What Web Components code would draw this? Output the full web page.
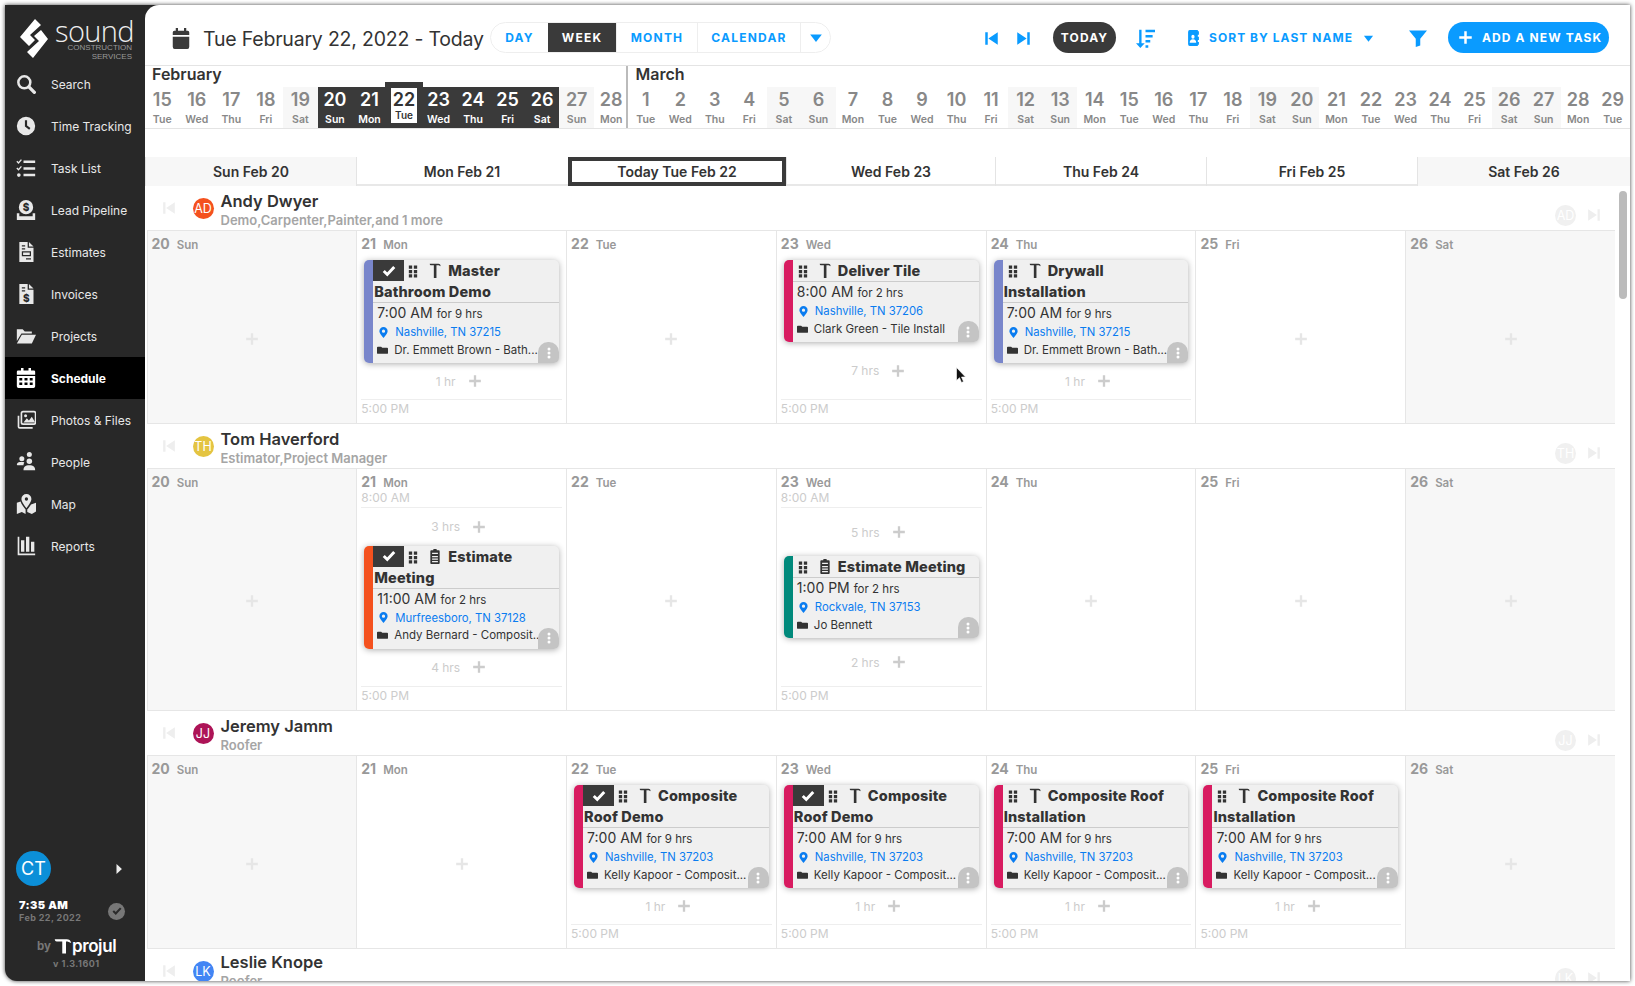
<!DOCTYPE html>
<html lang="en">
<head>
<meta charset="utf-8">
<title>Schedule</title>
<style>
	html, body { margin: 0; height: 100%; overflow: hidden; background: #fff; font-family: Inter, "Liberation Sans", sans-serif; }
	body { padding: 5px; box-sizing: border-box; }
</style>
</head>
<body>

<x-app>
	<x-sidebar slot="side">
		<x-nav-item icon="search" label="Search"></x-nav-item>
		<x-nav-item icon="clock" label="Time Tracking"></x-nav-item>
		<x-nav-item icon="tasks" label="Task List"></x-nav-item>
		<x-nav-item icon="lead" label="Lead Pipeline"></x-nav-item>
		<x-nav-item icon="estimate" label="Estimates"></x-nav-item>
		<x-nav-item icon="invoice" label="Invoices"></x-nav-item>
		<x-nav-item icon="open-folder" label="Projects"></x-nav-item>
		<x-nav-item icon="calendar-grid" label="Schedule" active></x-nav-item>
		<x-nav-item icon="photos" label="Photos &amp; Files"></x-nav-item>
		<x-nav-item icon="people" label="People"></x-nav-item>
		<x-nav-item icon="map" label="Map"></x-nav-item>
		<x-nav-item icon="reports" label="Reports"></x-nav-item>
	</x-sidebar>

	<x-topbar></x-topbar>
	<x-month-strip></x-month-strip>
	<x-week-head></x-week-head>

	<x-schedule>
		<x-person-row name="Andy Dwyer" roles="Demo,Carpenter,Painter,and 1 more" initials="AD" color="#f4511e" style="--grid-h:192px">
			<x-day date="20" dow="Sun" weekend></x-day>
			<x-day date="21" dow="Mon">
				<x-task-card strip="#7986cb" check tool="hammer" title="Master Bathroom Demo" time="7:00 AM" hrs="for 9 hrs" place="Nashville, TN 37215" job="Dr. Emmett Brown - Bath..."></x-task-card>
				<x-gap label="1 hr"></x-gap>
			</x-day>
			<x-day date="22" dow="Tue"></x-day>
			<x-day date="23" dow="Wed">
				<x-task-card strip="#d81b60" tool="hammer" title="Deliver Tile" time="8:00 AM" hrs="for 2 hrs" place="Nashville, TN 37206" job="Clark Green - Tile Install"></x-task-card>
				<x-gap label="7 hrs"></x-gap>
			</x-day>
			<x-day date="24" dow="Thu">
				<x-task-card strip="#7986cb" tool="hammer" title="Drywall Installation" time="7:00 AM" hrs="for 9 hrs" place="Nashville, TN 37215" job="Dr. Emmett Brown - Bath..."></x-task-card>
				<x-gap label="1 hr"></x-gap>
			</x-day>
			<x-day date="25" dow="Fri"></x-day>
			<x-day date="26" dow="Sat" weekend></x-day>
		</x-person-row>

		<x-person-row name="Tom Haverford" roles="Estimator,Project Manager" initials="TH" color="#e4c441" style="--grid-h:241px">
			<x-day date="20" dow="Sun" weekend></x-day>
			<x-day date="21" dow="Mon" start="8:00 AM">
				<x-gap label="3 hrs"></x-gap>
				<x-task-card strip="#f4511e" check tool="clipboard" title="Estimate Meeting" time="11:00 AM" hrs="for 2 hrs" place="Murfreesboro, TN 37128" job="Andy Bernard - Composit..."></x-task-card>
				<x-gap label="4 hrs"></x-gap>
			</x-day>
			<x-day date="22" dow="Tue"></x-day>
			<x-day date="23" dow="Wed" start="8:00 AM">
				<x-gap label="5 hrs"></x-gap>
				<x-task-card strip="#00897b" tool="clipboard" title="Estimate Meeting" time="1:00 PM" hrs="for 2 hrs" place="Rockvale, TN 37153" job="Jo Bennett"></x-task-card>
				<x-gap label="2 hrs"></x-gap>
			</x-day>
			<x-day date="24" dow="Thu"></x-day>
			<x-day date="25" dow="Fri"></x-day>
			<x-day date="26" dow="Sat" weekend></x-day>
		</x-person-row>

		<x-person-row name="Jeremy Jamm" roles="Roofer" initials="JJ" color="#ad1457" style="--grid-h:192px">
			<x-day date="20" dow="Sun" weekend></x-day>
			<x-day date="21" dow="Mon"></x-day>
			<x-day date="22" dow="Tue">
				<x-task-card strip="#d81b60" check tool="hammer" title="Composite Roof Demo" time="7:00 AM" hrs="for 9 hrs" place="Nashville, TN 37203" job="Kelly Kapoor - Composit..."></x-task-card>
				<x-gap label="1 hr"></x-gap>
			</x-day>
			<x-day date="23" dow="Wed">
				<x-task-card strip="#d81b60" check tool="hammer" title="Composite Roof Demo" time="7:00 AM" hrs="for 9 hrs" place="Nashville, TN 37203" job="Kelly Kapoor - Composit..."></x-task-card>
				<x-gap label="1 hr"></x-gap>
			</x-day>
			<x-day date="24" dow="Thu">
				<x-task-card strip="#d81b60" tool="hammer" title="Composite Roof Installation" time="7:00 AM" hrs="for 9 hrs" place="Nashville, TN 37203" job="Kelly Kapoor - Composit..."></x-task-card>
				<x-gap label="1 hr"></x-gap>
			</x-day>
			<x-day date="25" dow="Fri">
				<x-task-card strip="#d81b60" tool="hammer" title="Composite Roof Installation" time="7:00 AM" hrs="for 9 hrs" place="Nashville, TN 37203" job="Kelly Kapoor - Composit..."></x-task-card>
				<x-gap label="1 hr"></x-gap>
			</x-day>
			<x-day date="26" dow="Sat" weekend></x-day>
		</x-person-row>

		<x-person-row name="Leslie Knope" roles="Roofer" initials="LK" color="#4285f4" style="--grid-h:192px;--name-top:2px"></x-person-row>
	</x-schedule>

	<x-cursor slot="over"></x-cursor>
</x-app>

<script>
////////////////////////////////////////////////////////////////
//	icons, all drawn on a 24 box unless a size says otherwise
const
ICONS = {
	search			: `<circle cx="10" cy="10" r="7.2" fill="none" stroke="currentColor" stroke-width="3"/><path d="M15.5 15.5 22 22" stroke="currentColor" stroke-width="4" stroke-linecap="round"/>`
,	clock			: `<path fill-rule="evenodd" fill="currentColor" d="M12 1a11 11 0 1 0 0 22 11 11 0 0 0 0-22ZM10.7 5h2.6v6.5l4 3-1.5 2-5.1-3.9Z"/>`
,	tasks			: `<path fill="currentColor" d="M9 3h14v3H9zM9 11h14v3H9zM9 19h14v3H9z"/><path d="m1 4 2 2 3.5-4M1 12l2 2 3.5-4" fill="none" stroke="currentColor" stroke-width="1.6"/><circle cx="3.4" cy="20.5" r="2.2" fill="currentColor"/>`
,	lead			: `<path fill-rule="evenodd" fill="currentColor" d="M12 0a8.6 8.6 0 1 0 0 17.2A8.6 8.6 0 0 0 12 0ZM1 16h3v3.6h16V16h3v8H1Z"/><text x="12" y="13.4" text-anchor="middle" font-size="12" font-weight="800" font-family="Inter" fill="#282828">$</text>`
,	estimate		: `<path fill="currentColor" d="M4 0h10v7h7v17H4Z"/><path fill="currentColor" d="M15.5 0 21 5.5h-5.500Z"/><path fill="#282828" d="M7 4h4v1.500H7zM7 7.500h4V9H7zM7 11h11v6H7z"/><path fill="currentColor" d="M8.500 12.500h8v3h-8z"/><path fill="#282828" d="M12 19.500h6V21h-6z"/>`
,	invoice			: `<path fill="currentColor" d="M4 0h10v7h7v17H4Z"/><path fill="currentColor" d="M15.5 0 21 5.5h-5.500Z"/><path fill="#282828" d="M7 4h4v1.500H7zM7 7.500h4V9H7z"/><text x="12.500" y="21" text-anchor="middle" font-size="12" font-weight="800" font-family="Inter" fill="#282828">$</text>`
,	'open-folder'	: `<path fill="currentColor" d="M1 4h7l2.500 2.500H19V9H6.500L1 18ZM7 10.500h17L19 21H1Z"/>`
,	'calendar-grid'	: `<path fill-rule="evenodd" fill="currentColor" d="M6 0h3v3h6V0h3v3h3.500A1.500 1.500 0 0 1 23 4.500V8H1V4.500A1.500 1.500 0 0 1 2.500 3H6ZM1 9.500h22V22a2 2 0 0 1-2 2H3a2 2 0 0 1-2-2ZM4 12v3h3.500v-3Zm6.200 0v3h3.600v-3Zm6.300 0v3H20v-3ZM4 17.500v3h3.500v-3Zm6.200 0v3h3.600v-3Zm6.300 0v3H20v-3Z"/>`
,	photos			: `<path fill="none" stroke="currentColor" stroke-width="2" d="M3 7v13a1.500 1.500 0 0 0 1.500 1.500H20"/><rect x="6.500" y="2" width="17" height="15" rx="2" fill="none" stroke="currentColor" stroke-width="2"/><path fill="currentColor" d="m9 15 4-5 2.500 2.500L19 8l4 7Z"/><circle cx="11.500" cy="6.800" r="1.800" fill="currentColor"/>`
,	people			: `<circle cx="16" cy="3" r="3" fill="currentColor"/><circle cx="7" cy="8" r="3" fill="currentColor"/><circle cx="16" cy="11" r="3.300" fill="currentColor"/><path fill="currentColor" d="M1 15.500C1 12.500 3 12 7 12c1.500 0 2.500.2 3 .5-.8 1.500-1 2.500-1 3.500H2ZM9 22c0-4 2-6 7-6s7 2 7 6Z"/>`
,	map				: `<path fill-rule="evenodd" fill="currentColor" d="M12.500 0a6 6 0 0 1 6 6c0 3-4 8.500-6 11-2-2.500-6-8-6-11a6 6 0 0 1 6-6Zm0 4a2 2 0 1 0 0 4 2 2 0 0 0 0-4Z"/><path fill="currentColor" d="M1 10.500 5.500 9c1 3 3 6 6 9.500V24L7 21.500 1 24ZM13.500 18.500c1-1 3-3.500 4.500-6l6-2V21l-5 3-5.500-2.500Z"/>`
,	reports			: `<path fill="currentColor" d="M2 1h2v20h19v2H2ZM6 5h4v14H6zM12 1h4v18h-4zM18 7h4v12h-4z"/>`
,	calendar		: `<path fill="currentColor" d="M5 0h3v3h8V0h3v3h2a2 2 0 0 1 2 2v3H1V5a2 2 0 0 1 2-2h2ZM1 10h22v11.500a2.500 2.500 0 0 1-2.500 2.500h-17A2.500 2.500 0 0 1 1 21.500Z"/>`
,	'skip-left'		: `<path fill="currentColor" d="M2 2h4v20H2zM22 2v20L7 12Z"/>`
,	'skip-right'	: `<path fill="currentColor" d="M18 2h4v20h-4zM2 2v20l15-10Z"/>`
,	sort			: `<path fill="currentColor" d="M4 1h3v17h4l-5.500 6L0 18h4ZM12 1h12v3.200H12zM12 7.500h9v3.200h-9zM12 14h6v3.200h-6zM12 20.500h3.500v3.200H12z"/>`
,	contact			: `<path fill-rule="evenodd" fill="currentColor" d="M5 0h15v2h2v5h-2v3h2v5h-2v3h2v4h-2v2H5a3 3 0 0 1-3-3V3a3 3 0 0 1 3-3Zm6 7a3 3 0 1 0 0 6 3 3 0 0 0 0-6ZM5 19h12c0-3-2-5-6-5s-6 2-6 5Z"/>`
,	filter			: `<path fill="currentColor" d="M0 2h24L15 13v9l-6 2V13Z"/>`
,	plus			: `<path fill="currentColor" d="M10 2h4v8h8v4h-8v8h-4v-8H2v-4h8Z"/>`
,	'caret-down'	: `<path fill="currentColor" d="M2 6h20L12 19Z"/>`
,	'caret-right'	: `<path fill="currentColor" d="M6 2v20l13-10Z"/>`
,	check			: `<path fill="none" stroke="currentColor" stroke-width="5" d="m3 12 6 6L21 5"/>`
,	grip			: `<path fill="currentColor" d="M2 1h8v6H2zM14 1h8v6h-8zM2 9h8v6H2zM14 9h8v6h-8zM2 17h8v6H2zM14 17h8v6h-8z"/>`
,	hammer			: `<path fill="currentColor" d="M3 1h15c2 0 3.500 1 3.500 4l-3-1.500H14.500V24h-4.500V3.500H6C4 3.500 3 3 3 1Z"/>`
,	clipboard		: `<path fill-rule="evenodd" fill="currentColor" d="M9 2a3 3 0 0 1 6 0h3.500A1.500 1.500 0 0 1 20 3.500v19a1.500 1.500 0 0 1-1.500 1.500h-13A1.500 1.500 0 0 1 4 22.500v-19A1.500 1.500 0 0 1 5.500 2ZM7 6v2h10V6Zm0 5v2h10v-2Zm0 4v2h10v-2Zm0 4v2h10v-2Z"/>`
,	pin				: `<path fill-rule="evenodd" fill="currentColor" d="M12 0a9 9 0 0 1 9 9c0 5-6 11-9 15-3-4-9-10-9-15a9 9 0 0 1 9-9Zm0 5.500a3.500 3.500 0 1 0 0 7 3.500 3.500 0 0 0 0-7Z"/>`
,	folder			: `<path fill="currentColor" d="M2 4h7l2.500 2.500H22a2 2 0 0 1 2 2V19a2 2 0 0 1-2 2H2a2 2 0 0 1-2-2V6a2 2 0 0 1 2-2Z"/>`
,	kebab			: `<circle cx="12" cy="4" r="3" fill="currentColor"/><circle cx="12" cy="12" r="3" fill="currentColor"/><circle cx="12" cy="20" r="3" fill="currentColor"/>`
}

const
Icon = ( name, w, h = w, style = '' ) => `<svg viewBox="0 0 24 24" width="${ w }" height="${ h }" preserveAspectRatio="none" style="flex:none;${ style }" aria-hidden="true">${ ICONS[ name ] }</svg>`

//	every element is the same thing: a style and a render of its attributes
const
Define = ( tag, css, render ) => customElements.define( tag, class extends HTMLElement {
	connectedCallback() {
		if( this.shadowRoot ) return
		this.attachShadow( { mode: 'open' } ).innerHTML = `<style>:host,*{box-sizing:border-box}${ css }</style>${ render( this ) }`
	}
} )

const
BLUE = '#0a9bff'

Define( 'x-app', `
	:host { display: flex; width: 1625px; height: 976px; background: #282828; border-radius: 0 0 0 12px; box-shadow: 0 0 4px rgba(0,0,0,.75); font-family: Inter, "Liberation Sans", sans-serif; overflow: hidden; }
	.side { flex: none; width: 140px; }
	.main { flex: 1; min-width: 0; display: flex; flex-direction: column; background: #fff; border-top-left-radius: 14px; overflow: hidden; }
`, () => `
	<div class="side"><slot name="side"></slot></div>
	<div class="main"><slot></slot></div>
	<slot name="over"></slot>
` )

Define( 'x-sidebar', `
	:host { display: flex; flex-direction: column; height: 100%; color: #eee; }
	.logo { height: 58px; flex: none; position: relative; display: flex; padding: 14px 0 0 15px; gap: 7px; }
	.word { flex: none; width: 77px; text-align: right; color: #fff; font-family: "Open Sans", sans-serif; }
	.word b { display: block; font-weight: 300; font-size: 29px; line-height: 24px; letter-spacing: -.6px; color: #eee; }
	.word i { display: block; font-style: normal; font-family: "Liberation Sans", sans-serif; font-size: 8px; line-height: 9px; color: #999; }
	.foot { margin-top: auto; padding: 0 0 0 11px; color: #777; font-weight: 700; }
	.me { display: flex; align-items: center; justify-content: space-between; padding-right: 21px; }
	.avatar { width: 35px; height: 35px; border-radius: 50%; background: #0c8fd8; color: #fff; font-size: 18px; font-weight: 400; display: flex; align-items: center; justify-content: center; }
	.clock { display: flex; align-items: center; justify-content: space-between; margin-top: 12px; padding: 0 20px 0 3px; }
	.clock b { display: block; color: #fff; font-size: 11px; line-height: 14px; letter-spacing: .4px; }
	.clock span { display: block; font-size: 9px; line-height: 12px; letter-spacing: .4px; }
	.ok { width: 17px; height: 17px; border-radius: 50%; background: #777; color: #2b2b2b; display: flex; align-items: center; justify-content: center; }
	.by { display: flex; align-items: center; margin: 11px 0 0 21px; height: 22px; font-size: 11.500px; }
	.by svg { margin: 0 0 0 3px; }
	.by strong { color: #fff; font-size: 17px; letter-spacing: -.4px; font-weight: 600; }
	.ver { margin: 1px 0 11px 37px; font-size: 9px; line-height: 12px; letter-spacing: .5px; }
`, () => `
	<div class="logo">
		<svg width="28" height="39" viewBox="0 0 28 39" style="flex:none" aria-hidden="true">
			<path fill="#fff" d="M15 0 21 6 10 16 15 21 9 27 0 18Z"/>
			<path fill="#fff" d="M21 11 28 20 13 39 7 33 19 22 14 17Z"/>
		</svg>
		<div class="word"><b>sound</b><i>CONSTRUCTION</i><i>SERVICES</i></div>
	</div>
	<slot></slot>
	<div class="foot">
		<div class="me"><div class="avatar">CT</div>${ Icon( 'caret-right', 10, 12, 'color:#eee' ) }</div>
		<div class="clock">
			<div><b>7:35 AM</b><span>Feb 22, 2022</span></div>
			<div class="ok">${ Icon( 'check', 10 ) }</div>
		</div>
		<div class="by">by <svg width="18" height="18" viewBox="0 0 24 24" aria-hidden="true"><path fill="#fff" d="M1 3h16c3 0 5 1 6 5l-5-2h-2v16h-5V6H6C3 6 1 6 1 3Z"/></svg><strong>projul</strong></div>
		<div class="ver">v 1.3.1601</div>
	</div>
` )

Define( 'x-nav-item', `
	:host { display: flex; flex: none; align-items: center; gap: 15px; height: 42px; padding-left: 11px; font-size: 12px; color: #e8e8e8; }
	:host([active]) { background: #000; color: #fff; font-weight: 700; }
	.icon { width: 20px; height: 20px; display: flex; align-items: center; justify-content: center; }
`, el => `<div class="icon">${ Icon( el.getAttribute( 'icon' ), 20 ) }</div><span>${ el.getAttribute( 'label' ) }</span>` )

Define( 'x-topbar', `
	:host { display: flex; flex: none; align-items: center; height: 61px; padding: 6px 21px 0 27px; border-bottom: 1px solid #e4e4e4; color: #333; }
	.title { flex: none; width: 274px; margin-left: 13px; padding-top: 1px; font-size: 19.500px; letter-spacing: -.2px; white-space: nowrap; }
	.tabs { display: flex; flex: none; height: 31px; margin: -1px 0 0 13px; border: 1px solid #eee; border-radius: 16px; overflow: hidden; font-size: 12px; font-weight: 700; letter-spacing: 1.200px; color: ${ BLUE }; }
	.tabs div { display: flex; align-items: center; justify-content: center; border-left: 1px solid #eee; }
	.tabs div:first-child { border: 0; }
	.tabs .on { background: #3a3a3a; color: #fff; border: 0; }
	.pill { display: flex; flex: none; align-items: center; height: 31px; margin-top: -1px; border-radius: 16px; font-size: 12px; font-weight: 700; letter-spacing: 1.100px; color: #fff; }
	.sort { flex: none; margin-top: -1px; color: ${ BLUE }; font-size: 12px; font-weight: 700; letter-spacing: 1.050px; white-space: nowrap; }
`, () => `
	${ Icon( 'calendar', 18, 21, 'color:#3a3a3a' ) }
	<div class="title">Tue February 22, 2022 - Today</div>
	<div class="tabs">
		<div style="width:57px">DAY</div>
		<div class="on" style="width:68px">WEEK</div>
		<div style="width:81px">MONTH</div>
		<div style="width:103px">CALENDAR</div>
		<div style="width:30px">${ Icon( 'caret-down', 14 ) }</div>
	</div>
	${ Icon( 'skip-left', 15, 15, `color:${ BLUE };margin-left:153px` ) }
	${ Icon( 'skip-right', 15, 15, `color:${ BLUE };margin-left:17px` ) }
	<div class="pill" style="background:#3a3a3a;width:63px;justify-content:center;margin-left:22px">TODAY</div>
	${ Icon( 'sort', 19, 19, `color:${ BLUE };margin-left:20px` ) }
	${ Icon( 'contact', 13, 16, `color:${ BLUE };margin-left:32px` ) }
	<div class="sort" style="width:142px;margin-left:9px">SORT BY LAST NAME</div>
	${ Icon( 'caret-down', 11, 11, `color:${ BLUE };margin-left:12px` ) }
	${ Icon( 'filter', 18, 18, `color:${ BLUE };margin-left:35px` ) }
	<div class="pill" style="background:${ BLUE };width:161px;padding-left:10px;margin-left:21px">${ Icon( 'plus', 15 ) }<span style="margin-left:9px">ADD A NEW TASK</span></div>
` )

const
DOW = [ 'Sun', 'Mon', 'Tue', 'Wed', 'Thu', 'Fri', 'Sat' ]

const
StripCells = ( month, from, to ) => {
	let out = ''
	for( let d = from; d <= to; d++ ) {
		const
		dow		= new Date( 2022, month, d ).getDay()
	,	picked	= month === 1 && d >= 20 && d <= 26
	,	today	= month === 1 && d === 22
	,	weekend	= dow === 0 || dow === 6
		out += `<div class="cell${ weekend ? ' weekend' : '' }${ picked ? ' picked' : '' }${ today ? ' today' : '' }"><b>${ d }</b><span>${ DOW[ dow ] }</span></div>`
	}
	return out
}

Define( 'x-month-strip', `
	:host { display: flex; flex: none; height: 63px; border-bottom: 1px solid #e4e4e4; }
	.month { min-width: 0; }
	.month + .month { box-shadow: -2px 0 0 #bbb; }
	h3 { margin: 0; height: 21px; padding-left: 7px; font-size: 16px; line-height: 17px; font-weight: 600; color: #333; }
	.cells { display: grid; grid-auto-flow: column; grid-auto-columns: 1fr; height: 41px; }
	.cell { position: relative; display: flex; flex-direction: column; align-items: center; padding-top: 1px; color: #888; }
	.cell b { font-size: 18px; line-height: 24px; font-weight: 600; }
	.cell span { font-size: 10.500px; line-height: 14px; font-weight: 600; margin-top: 1px; }
	.weekend { background: #f7f7f7; }
	.picked { background: #3a3a3a; color: #fff; }
	.today { color: #333; }
	.today::before { content: ''; position: absolute; left: -2px; right: -2px; top: -5px; height: 5px; background: #3a3a3a; }
	.today::after { content: ''; position: absolute; left: 4px; right: 4px; top: 1px; height: 35px; background: #fff; }
	.today b, .today span { position: relative; z-index: 1; }
	.today span { font-size: 10px; line-height: 12px; margin-top: -3px; }
`, () => `
	<div class="month" style="flex:14 1 0"><h3>February</h3><div class="cells">${ StripCells( 1, 15, 28 ) }</div></div>
	<div class="month" style="flex:29 1 0"><h3>March</h3><div class="cells">${ StripCells( 2, 1, 29 ) }</div></div>
` )

Define( 'x-week-head', `
	:host { display: grid; flex: none; grid-template-columns: 211px 211px 219px 209px 211px 211px 1fr; height: 29px; margin-top: 28px; border-bottom: 2px solid #e8e8e8; font-size: 14px; font-weight: 600; color: #333; }
	div { display: flex; align-items: center; justify-content: center; border-left: 1px solid #e4e4e4; }
	.weekend { background: #f7f7f7; }
	.today { border: 4px solid #3a3a3a; height: 29px; margin-left: 1px; }
`, () => `
	<div class="weekend">Sun Feb 20</div>
	<div>Mon Feb 21</div>
	<div class="today">Today Tue Feb 22</div>
	<div>Wed Feb 23</div>
	<div>Thu Feb 24</div>
	<div>Fri Feb 25</div>
	<div class="weekend">Sat Feb 26</div>
` )

Define( 'x-schedule', `
	:host { display: flex; flex: 1; min-height: 0; overflow: hidden; padding-left: 1.500px; }
	.rows { flex: 1; min-width: 0; display: flex; flex-direction: column; }
	.gutter { flex: none; width: 15px; padding: 5px 3px 0 4px; }
	.thumb { height: 108px; border-radius: 4px; background: #bbb; }
`, () => `
	<div class="rows"><slot></slot></div>
	<div class="gutter"><div class="thumb"></div></div>
` )

Define( 'x-person-row', `
	:host { display: block; flex: none; }
	.head { display: flex; align-items: center; height: 45px; padding-right: 14px; border-bottom: 1px solid #e6e6e6; color: #333; }
	.dot { flex: none; width: 21px; height: 21px; border-radius: 50%; color: #fff; font-size: 12.500px; display: flex; align-items: center; justify-content: center; }
	.who { align-self: flex-start; padding-top: var(--name-top, 4px); margin-left: 7px; }
	.who b { display: block; font-size: 16.500px; line-height: 22px; font-weight: 600; white-space: nowrap; }
	.who span { display: block; font-size: 13px; line-height: 17px; font-weight: 600; color: #a5a5a5; white-space: nowrap; }
	.far { margin-left: auto; padding-top: 14px; display: flex; align-items: center; gap: 11px; }
	.grid { display: grid; grid-template-columns: repeat(7, 1fr); height: calc(var(--grid-h) + 1px); border-bottom: 1px solid #e6e6e6; }
`, el => `
	<div class="head">
		${ Icon( 'skip-left', 14, 14, 'color:#eee;margin-left:15px' ) }
		<div class="dot" style="background:${ el.getAttribute( 'color' ) };margin-left:17px">${ el.getAttribute( 'initials' ) }</div>
		<div class="who"><b>${ el.getAttribute( 'name' ) }</b><span>${ el.getAttribute( 'roles' ) }</span></div>
		<div class="far">
			<div class="dot" style="background:#f0f0f0">${ el.getAttribute( 'initials' ) }</div>
			${ Icon( 'skip-right', 14, 14, 'color:#eee' ) }
		</div>
	</div>
	<div class="grid"><slot></slot></div>
` )

Define( 'x-day', `
	:host { display: flex; flex-direction: column; min-width: 0; min-height: 0; padding: 0 4px; border-left: 1px solid #e6e6e6; color: #999; }
	:host([weekend]) { background: #f7f7f7; }
	.date { flex: none; height: 29px; line-height: 25px; font-size: 14px; font-weight: 700; white-space: nowrap; }
	.date span { margin-left: 7px; font-size: 11.500px; font-weight: 600; }
	:host([start]) .date { height: 20px; }
	.start { flex: none; height: 19px; line-height: 18px; border-bottom: 1px solid #eee; font-size: 12px; color: #ccc; }
	.body { flex: 1; min-height: 0; display: flex; flex-direction: column; }
	.foot { flex: none; height: 24px; line-height: 18px; border-top: 1px solid #eee; font-size: 12px; color: #ccc; }
	.free { flex: 1; display: flex; align-items: center; justify-content: center; color: #e6e6e6; padding-bottom: 6px; }
`, el => {
	const
	start	= el.getAttribute( 'start' )
,	busy	= el.children.length > 0
	return `
		<div class="date">${ el.getAttribute( 'date' ) }<span>${ el.getAttribute( 'dow' ) }</span></div>
		${ start ? `<div class="start">${ start }</div>` : '' }
		${ busy
			? `<div class="body"><slot></slot></div><div class="foot">5:00 PM</div>`
			: `<div class="free">${ Icon( 'plus', 14 ) }</div>`
		}
	`
} )

Define( 'x-gap', `
	:host { display: flex; flex: 1; align-items: center; justify-content: center; gap: 12px; padding-right: 6px; font-size: 12px; color: #ccc; }
	svg { color: #ccc; }
`, el => `<span>${ el.getAttribute( 'label' ) }</span>${ Icon( 'plus', 14 ) }` )

Define( 'x-task-card', `
	:host { display: flex; flex: none; margin: 0 3px; background: #f0f0f0; border-radius: 5px; box-shadow: 0 1px 6px rgba(0,0,0,.32); overflow: hidden; position: relative; color: #333; }
	.strip { flex: none; width: 9px; }
	.info { flex: 1; min-width: 0; }
	.title { padding: 0 4px 0 1px; border-bottom: 1px solid #ccc; font-size: 14.500px; line-height: 21px; font-weight: 800; letter-spacing: .15px; }
	.check { display: inline-flex; align-items: center; justify-content: center; vertical-align: top; width: 31px; height: 21px; margin-left: -1px; background: #3a3a3a; color: #fff; }
	.title svg { vertical-align: -2px; }
	.rows { padding: 1px 0 4.500px 4px; }
	.time { font-size: 14px; line-height: 18.500px; white-space: nowrap; }
	.time small { font-size: 11.500px; }
	.line { display: flex; align-items: center; height: 17.500px; font-size: 11.500px; white-space: nowrap; overflow: hidden; }
	.place { color: #0a7cf0; font-size: 11.300px; }
	.more { position: absolute; right: 0; bottom: 0; width: 21px; height: 21px; border-radius: 10px 10px 0 0; background: #c4c4c4; color: #fff; display: flex; align-items: center; justify-content: center; }
`, el => {
	const
	a = n => el.getAttribute( n )
	return `
		<div class="strip" style="background:${ a( 'strip' ) }"></div>
		<div class="info">
			<div class="title">${ el.hasAttribute( 'check' ) ? `<span class="check">${ Icon( 'check', 14 ) }</span>` : '' }${ Icon( 'grip', 10, 13, 'margin:0 12px 0 4px' ) }${ Icon( a( 'tool' ), 14, 15, 'margin:0 6px 0 -2px' ) }${ a( 'title' ) }</div>
			<div class="rows">
				<div class="time">${ a( 'time' ) } <small>${ a( 'hrs' ) }</small></div>
				<div class="line place">${ Icon( 'pin', 11, 11, 'margin-left:1px' ) }<span style="margin-left:6px">${ a( 'place' ) }</span></div>
				<div class="line">${ Icon( 'folder', 11, 10 ) }<span style="margin-left:6px">${ a( 'job' ) }</span></div>
			</div>
		</div>
		<div class="more">${ Icon( 'kebab', 12 ) }</div>
	`
} )

Define( 'x-cursor', `
	:host { position: absolute; left: 956px; top: 367px; width: 11px; height: 18px; }
`, () => `<svg width="11" height="18" viewBox="0 0 11 18" aria-hidden="true"><path fill="#111" stroke="#fff" stroke-width=".6" d="M.5.500v13l3-2.800 2 4.800 2-.9-2-4.600h4Z"/></svg>` )
</script>
</body>
</html>
